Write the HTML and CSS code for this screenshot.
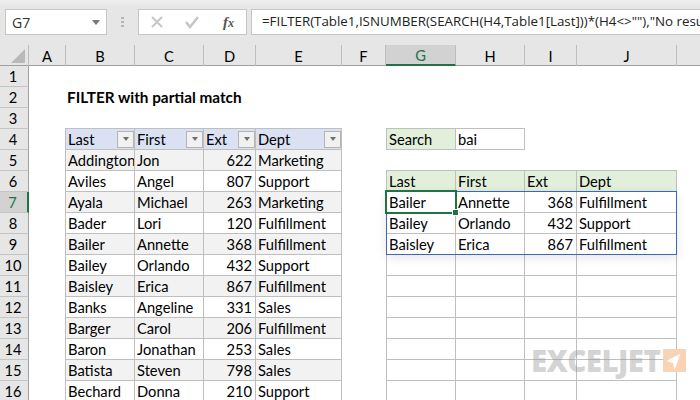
FILE: index.html
```html
<!DOCTYPE html>
<html lang="en">
<head>
<meta charset="utf-8">
<title>FILTER with partial match</title>
<link rel="stylesheet" href="styles.css">
</head>
<body>
<div class="app">
  <div class="fbar">
    <div class="namebox"><span>G7</span><i class="caret"></i></div>
    <div class="grip"><i></i><i></i><i></i></div>
    <div class="btns">
      <svg class="ic" width="14" height="14" viewBox="0 0 14 14"><path d="M2 2l10 10M12 2L2 12" stroke="#c6c6c6" stroke-width="2" fill="none"/></svg>
      <svg class="ic" width="16" height="14" viewBox="0 0 16 14"><path d="M2 7l4 5 8-10" stroke="#c6c6c6" stroke-width="2.6" fill="none"/></svg>
      <span class="fx">f<small>x</small></span>
    </div>
    <div class="formula">=FILTER(Table1,ISNUMBER(SEARCH(H4,Table1[Last]))*(H4&lt;&gt;""),"No resu</div>
  </div>
  <div class="sheet">
    <div class="row colheads">
      <div class="corner"><svg width="14" height="14" viewBox="0 0 14 14"><path d="M14 0V14H0Z" fill="#b9b9b9"/></svg></div>
      <div class="ch">A</div><div class="ch">B</div><div class="ch">C</div><div class="ch">D</div><div class="ch">E</div><div class="ch">F</div><div class="ch sel">G</div><div class="ch">H</div><div class="ch">I</div><div class="ch">J</div><div class="ch end"></div>
    </div>
    <div class="row"><div class="rh">1</div></div>
    <div class="row"><div class="rh">2</div><div></div><div class="title">FILTER with partial match</div></div>
    <div class="row"><div class="rh">3</div></div>
    <div class="row">
      <div class="rh">4</div><div></div>
      <div class="c th t l">Last<i class="fb"></i></div><div class="c th t">First<i class="fb"></i></div><div class="c th t">Ext<i class="fb"></i></div><div class="c th t">Dept<i class="fb"></i></div>
      <div></div>
      <div class="c gh t l">Search</div><div class="c t">bai</div>
    </div>
    <div class="row">
      <div class="rh">5</div><div></div>
      <div class="c z l">Addington</div><div class="c z">Jon</div><div class="c z n">622</div><div class="c z">Marketing</div>
    </div>
    <div class="row">
      <div class="rh">6</div><div></div>
      <div class="c l">Aviles</div><div class="c">Angel</div><div class="c n">807</div><div class="c">Support</div>
      <div></div>
      <div class="c gh t l">Last</div><div class="c gh t">First</div><div class="c gh t">Ext</div><div class="c gh t">Dept</div>
    </div>
    <div class="row">
      <div class="rh cur">7</div><div></div>
      <div class="c z l">Ayala</div><div class="c z">Michael</div><div class="c z n">263</div><div class="c z">Marketing</div>
      <div></div>
      <div class="c l">Bailer</div><div class="c">Annette</div><div class="c n">368</div><div class="c">Fulfillment</div>
    </div>
    <div class="row">
      <div class="rh">8</div><div></div>
      <div class="c l">Bader</div><div class="c">Lori</div><div class="c n">120</div><div class="c">Fulfillment</div>
      <div></div>
      <div class="c l">Bailey</div><div class="c">Orlando</div><div class="c n">432</div><div class="c">Support</div>
    </div>
    <div class="row">
      <div class="rh">9</div><div></div>
      <div class="c z l">Bailer</div><div class="c z">Annette</div><div class="c z n">368</div><div class="c z">Fulfillment</div>
      <div></div>
      <div class="c l">Baisley</div><div class="c">Erica</div><div class="c n">867</div><div class="c">Fulfillment</div>
    </div>
    <div class="row">
      <div class="rh">10</div><div></div>
      <div class="c l">Bailey</div><div class="c">Orlando</div><div class="c n">432</div><div class="c">Support</div>
      <div></div>
      <div class="c l"></div><div class="c"></div><div class="c"></div><div class="c"></div>
    </div>
    <div class="row">
      <div class="rh">11</div><div></div>
      <div class="c z l">Baisley</div><div class="c z">Erica</div><div class="c z n">867</div><div class="c z">Fulfillment</div>
      <div></div>
      <div class="c l"></div><div class="c"></div><div class="c"></div><div class="c"></div>
    </div>
    <div class="row">
      <div class="rh">12</div><div></div>
      <div class="c l">Banks</div><div class="c">Angeline</div><div class="c n">331</div><div class="c">Sales</div>
      <div></div>
      <div class="c l"></div><div class="c"></div><div class="c"></div><div class="c"></div>
    </div>
    <div class="row">
      <div class="rh">13</div><div></div>
      <div class="c z l">Barger</div><div class="c z">Carol</div><div class="c z n">206</div><div class="c z">Fulfillment</div>
      <div></div>
      <div class="c l"></div><div class="c"></div><div class="c"></div><div class="c"></div>
    </div>
    <div class="row">
      <div class="rh">14</div><div></div>
      <div class="c l">Baron</div><div class="c">Jonathan</div><div class="c n">253</div><div class="c">Sales</div>
      <div></div>
      <div class="c l"></div><div class="c"></div><div class="c"></div><div class="c"></div>
    </div>
    <div class="row">
      <div class="rh">15</div><div></div>
      <div class="c z l">Batista</div><div class="c z">Steven</div><div class="c z n">798</div><div class="c z">Sales</div>
      <div></div>
      <div class="c l"></div><div class="c"></div><div class="c"></div><div class="c"></div>
    </div>
    <div class="row">
      <div class="rh">16</div><div></div>
      <div class="c l">Bechard</div><div class="c">Donna</div><div class="c n">210</div><div class="c">Support</div>
      <div></div>
      <div class="c l"></div><div class="c"></div><div class="c"></div><div class="c"></div>
    </div>
    <div class="spill"></div>
    <div class="active"><i></i></div>
    <div class="mark"><span>EXCELJET</span><svg width="23" height="23" viewBox="0 0 23 23"><rect width="23" height="23" fill="#f8d3b4"/><path d="M17.5 4.5L3.5 12 10 14 11.5 21Z" fill="#fff"/></svg></div>
  </div>
</div>
</body>
</html>
```

FILE: styles.css
```css
* { box-sizing: border-box; }
html, body { margin: 0; padding: 0; }
body { width: 700px; height: 400px; overflow: hidden; background: #fff; font-family: "Lato", "Carlito", sans-serif; color: #000; }
.app { width: 700px; height: 400px; display: flex; flex-direction: column; overflow: hidden; }

.fbar { height: 45px; flex: none; display: flex; align-items: flex-start; padding: 9px 0 0 5px; background: linear-gradient(#efefef 0, #e6e6e6 6px); font-family: "Open Sans", sans-serif; }
.namebox { width: 102px; height: 26px; background: #fff; border: 1px solid #c6c6c6; display: flex; align-items: center; justify-content: space-between; padding: 0 6px 0 6px; font-size: 14px; color: #333; }
.caret { width: 0; height: 0; border: 4px solid transparent; border-top: 5px solid #777; border-bottom: 0; }
.grip { width: 31px; height: 26px; display: flex; flex-direction: column; align-items: center; justify-content: center; gap: 2px; }
.grip i { width: 3px; height: 2px; background: #b5b5b5; }
.btns { width: 109px; height: 26px; background: #fff; border: 1px solid #c6c6c6; display: flex; align-items: center; padding: 0 12px 0 11px; justify-content: space-between; }
.ic { display: block; }
.btns .ic + .ic { margin-right: 3px; }
.fx { font: italic 700 15px "Liberation Serif", serif; color: #555; }
.fx small { font-size: 12px; }
.formula { margin-left: 4px; flex: 1; height: 26px; background: #fff; border: 1px solid #c6c6c6; border-right: 0; padding: 0 0 0 10px; font-size: 13.33px; line-height: 23px; white-space: nowrap; overflow: hidden; color: #222; }

.sheet { position: relative; flex: 1; overflow: hidden; }
.row { display: grid; grid-template-columns: 29px 36px 70px 69px 52px 86px 44px 70px 69px 52px 100px 1fr; height: 21px; }

.colheads { grid-template-columns: 29px 37px 69px 69px 52px 86px 44px 70px 69px 52px 100px 1fr; background: #e6e6e6; border-bottom: 1px solid #9f9f9f; }
.corner { border-right: 1px solid #bdbdbd; display: flex; align-items: flex-end; justify-content: flex-end; padding: 0 3px 3px 0; }
.ch { display: flex; align-items: center; justify-content: center; font-size: 14.7px; border-right: 1px solid #bdbdbd; padding-top: 1px; }
.ch.end { border-right: 0; }
.ch.sel { background: #d2d2d2; color: #217346; border-bottom: 2px solid #217346; height: 21px; }

.rh { background: #e6e6e6; border-right: 1px solid #9f9f9f; border-bottom: 1px solid #c4c4c4; font-size: 14.7px; display: flex; align-items: center; justify-content: center; padding-right: 2px; }
.rh.cur { background: #d2d2d2; color: #217346; border-right: 2px solid #217346; }

.title { grid-column: span 5; font-weight: 700; font-size: 15.3px; line-height: 21px; padding-left: 2px; white-space: nowrap; }
.c { border-right: 1px solid #bfbfbf; border-bottom: 1px solid #bfbfbf; font-size: 14.7px; line-height: 21px; padding: 0 2px; white-space: nowrap; overflow: hidden; }
.c.l { border-left: 1px solid #bfbfbf; }
.c.t { border-top: 1px solid #bfbfbf; margin-top: -1px; height: 22px; }
.c.n { text-align: right; padding-right: 3px; }
.z { background: #f2f2f2; }
.th { background: #d9e1f2; display: flex; justify-content: space-between; align-items: center; padding: 0 0 0 2px; }
.gh { background: #e2efda; }
.fb { width: 17px; height: 17px; background: #f1f1f1; border: 1px solid #b4b4b4; flex: none; display: flex; align-items: center; justify-content: center; }
.fb::after { content: ""; border: 3.5px solid transparent; border-top: 4px solid #6f6f6f; border-bottom: 0; }

.spill { position: absolute; left: 386px; top: 146px; width: 291px; height: 64px; border: 1px solid #3a68b3; box-shadow: 0 3px 10px rgba(0,0,0,.1); pointer-events: none; }
.active { position: absolute; left: 385px; top: 145px; width: 72px; height: 24px; border: 2px solid #217346; }
.active i { position: absolute; right: -4px; bottom: -4px; width: 7px; height: 7px; background: #217346; border: 1px solid #fff; }

.mark { position: absolute; left: 531px; top: 304px; display: flex; align-items: center; gap: 3px; }
.mark span { font: 800 29.5px/23px "Open Sans", sans-serif; color: rgba(150,150,150,.42); letter-spacing: -.6px; }
```
